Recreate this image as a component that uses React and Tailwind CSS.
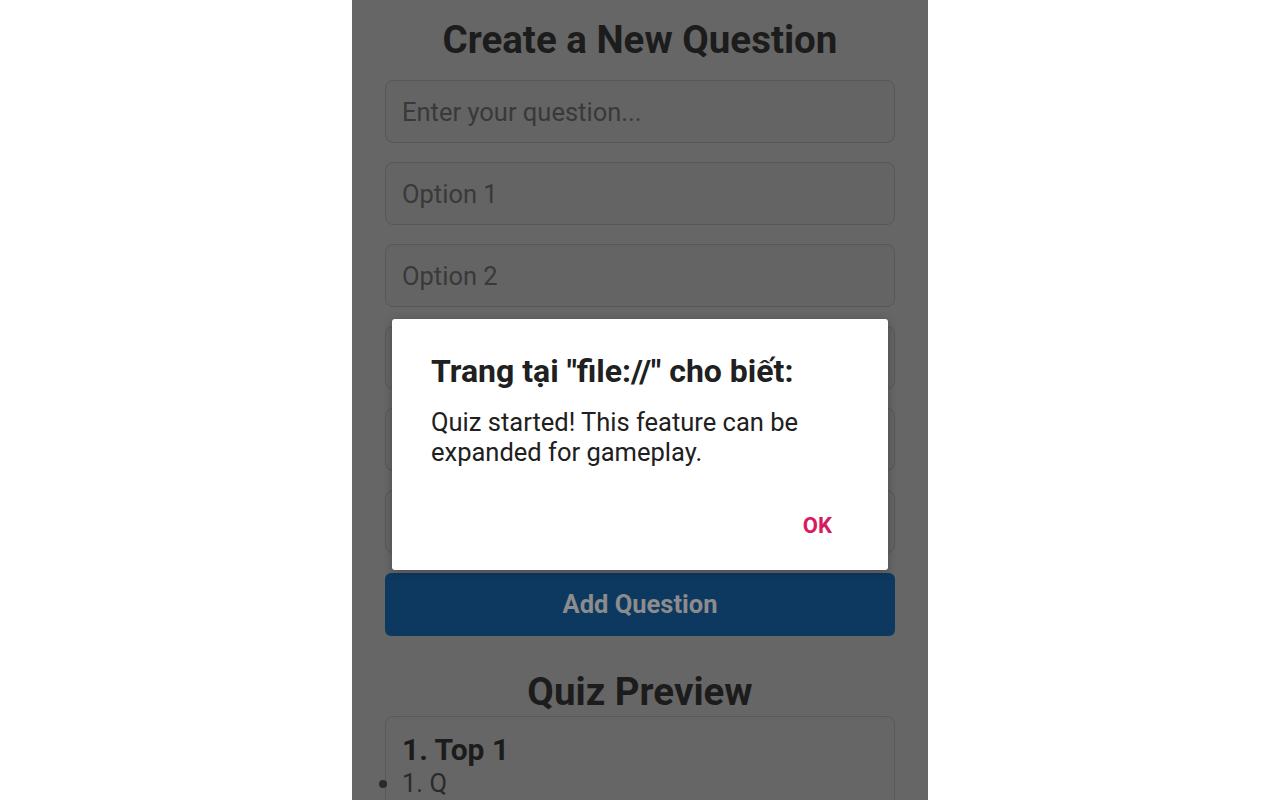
import React from "react";

const fields = [
    "Enter your question...",
    "Option 1",
    "Option 2",
    "Option 3",
    "Option 4",
    "Correct option (1-4)",
];

const App = () => {
    return (
        <div className="h-[800px] overflow-hidden bg-white flex justify-center font-['Roboto',sans-serif]">
            <div className="relative w-[576px] bg-[#666666] px-[33px]">
                <h2 className="mt-[17px] text-center text-[38.5px] leading-[46px] font-bold text-[#1c1c1c]">
                    Create a New Question
                </h2>

                <div className="mt-[17px] flex flex-col gap-[19px]">
                    {fields.map((f) => (
                        <input
                            key={f}
                            type="text"
                            placeholder={f}
                            className="h-[63px] w-full rounded-[8px] border border-[#575757] bg-[#646464] px-[16px] text-[25.5px] text-[#222] placeholder:text-[#393939] outline-none"
                        />
                    ))}
                </div>

                <button className="mt-[20px] h-[63px] w-full rounded-[6px] bg-[#0d3960] text-[25.5px] font-bold text-[#8c8c8c]">
                    Add Question
                </button>

                <h2 className="mt-[33px] text-center text-[38.5px] leading-[46px] font-bold text-[#1c1c1c]">
                    Quiz Preview
                </h2>

                <div className="mt-px rounded-[8px] border border-[#595959] pl-[16px] pr-[16px] pt-[16px] pb-4">
                    <h3 className="text-[30px] leading-[34px] font-bold text-[#1c1c1c]">1. Top 1</h3>
                    <ul className="list-disc text-[25.5px] leading-[32px] text-[#2a2a2a]">
                        <li>1. Q</li>
                    </ul>
                </div>

                {/* alert dialog over the dimmed page */}
                <div className="absolute left-[40px] top-[319px] h-[251px] w-[496px] rounded-[3px] bg-white pl-[39px] pr-[56px] pt-[34px] shadow-[0_2px_8px_rgba(0,0,0,0.25)]">
                    <h1 className="text-[32px] leading-[36px] font-bold text-[#202020]">
                        Trang tại "file://" cho biết:
                    </h1>
                    <p className="mt-[18px] text-[25.5px] leading-[30px] text-[#202020]">
                        Quiz started! This feature can be expanded for gameplay.
                    </p>
                    <div className="mt-[46px] flex justify-end">
                        <button className="text-[22px] leading-[26px] font-bold text-[#d81b60]">OK</button>
                    </div>
                </div>
            </div>
        </div>
    );
};

export default App;
